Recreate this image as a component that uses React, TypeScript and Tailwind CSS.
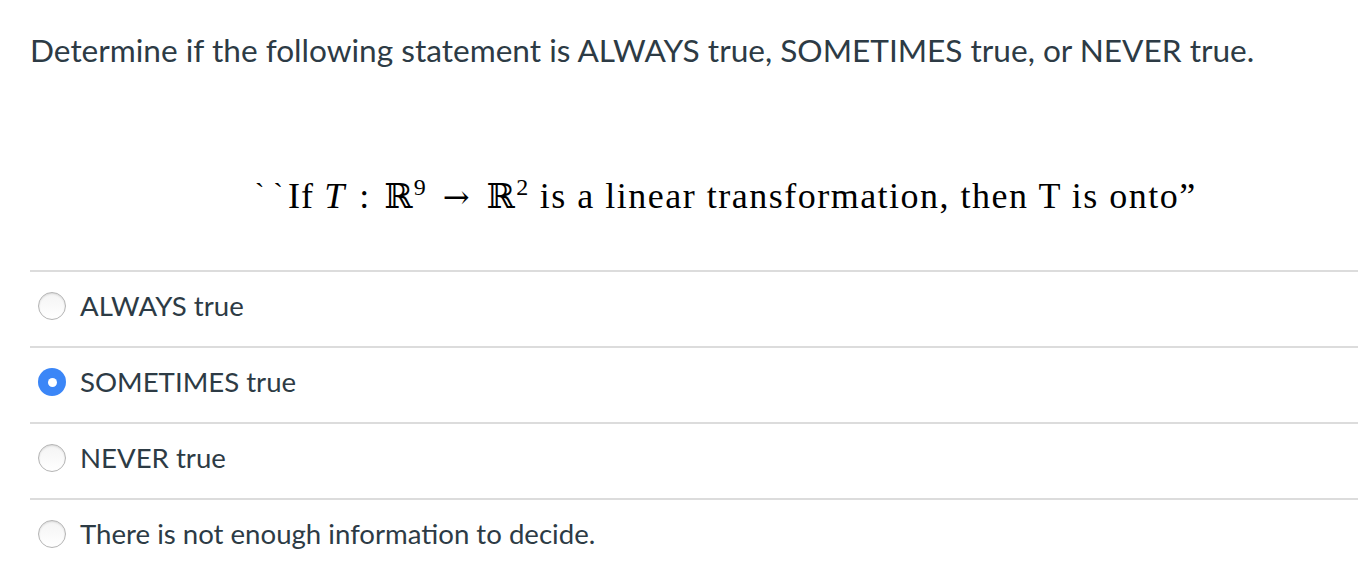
import React from "react";

const options = [
  { label: "ALWAYS true", selected: false },
  { label: "SOMETIMES true", selected: true },
  { label: "NEVER true", selected: false },
  { label: "There is not enough information to decide.", selected: false },
];

function Radio({ selected }: { selected: boolean }) {
  if (selected) {
    return (
      <span className="flex h-[28px] w-[28px] shrink-0 items-center justify-center rounded-full bg-[#3b86f7]">
        <span className="h-[9px] w-[9px] rounded-full bg-white" />
      </span>
    );
  }
  return (
    <span className="block h-[28px] w-[28px] shrink-0 rounded-full border border-[#b5b5b5] bg-gradient-to-b from-[#f4f4f4] to-white shadow-[inset_0_1px_2px_rgba(0,0,0,0.12)]" />
  );
}

export default function App() {
  return (
    <div className="min-h-[578px] w-full bg-white pl-[30px] text-[#2d3b45]" style={{ fontFamily: "Lato, 'Noto Sans', sans-serif" }}>
      <p className="pt-[30px] text-[31.6px] leading-[40px]">
        Determine if the following statement is ALWAYS true, SOMETIMES true, or NEVER true.
      </p>
      <p
        className="mt-[106px] flex items-baseline whitespace-pre pl-[225px] text-[36px] leading-[40px] tracking-[1.1px] text-black"
        style={{ fontFamily: "'Liberation Serif', 'DejaVu Serif', serif" }}
      >
        <span className="relative -top-[6px] mr-[4px] text-[28px]">` `</span>
        <span>If</span>
        <span className="ml-[10px] italic">T</span>
        <span className="mx-[14px]">:</span>
        <span style={{ fontFamily: "'DejaVu Serif', serif" }} className="text-[34px]">ℝ</span>
        <span className="relative -top-[13px] text-[24px]">9</span>
        <span style={{ fontFamily: "'DejaVu Serif', serif" }} className="mx-[16px] text-[32px]">→</span>
        <span style={{ fontFamily: "'DejaVu Serif', serif" }} className="text-[34px]">ℝ</span>
        <span className="relative -top-[13px] text-[24px]">2</span>
        <span className="tracking-[1.5px]"> is a linear transformation, then T is onto”</span>
      </p>
      <div className="mt-[50px]">
        {options.map((o) => (
          <div key={o.label} className="flex h-[76px] items-center border-t-2 border-[#dcdcdc] pb-[6px] pl-[8px]">
            <Radio selected={o.selected} />
            <span className="ml-[14px] text-[27.6px]">{o.label}</span>
          </div>
        ))}
      </div>
    </div>
  );
}
